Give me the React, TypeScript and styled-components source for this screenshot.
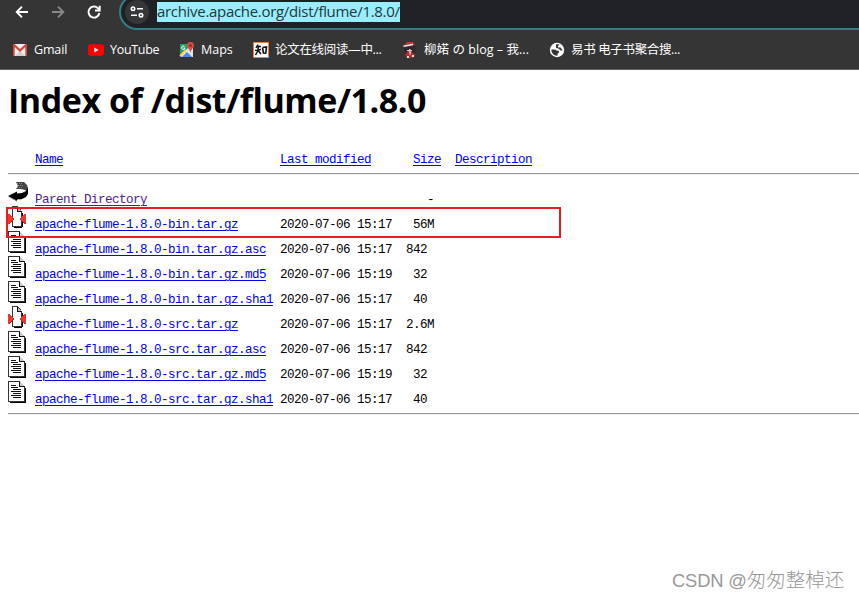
import React from 'react';
import styled, { createGlobalStyle } from 'styled-components';

const GlobalStyle = createGlobalStyle`
  * { box-sizing: border-box; }
  html, body { margin: 0; background: #fff; overflow: hidden; }
`;

const Page = styled.div`
  position: relative;
  width: 859px;
  height: 599px;
  overflow: hidden;
  display: flex;
  flex-direction: column;
  background: #fff;
`;

const Toolbar = styled.div`
  height: 30px;
  flex: none;
  display: flex;
  align-items: flex-start;
  background: #353535;
  overflow: hidden;
`;

const NavButtons = styled.div`
  width: 119px;
  height: 24px;
  flex: none;
  display: flex;
  align-items: center;
  gap: 16px;
  padding-left: 12px;
`;

const AddressBar = styled.div`
  width: 780px;
  height: 36px;
  flex: none;
  margin-top: -6px;
  display: flex;
  align-items: center;
  padding-left: 4px;
  border: 2px solid #318089;
  border-radius: 18px;
  background: #202124;
`;

const SiteChip = styled.div`
  width: 24px;
  height: 24px;
  display: flex;
  align-items: center;
  justify-content: center;
  border-radius: 50%;
  background: #353638;
`;

const Url = styled.span`
  width: 243px;
  height: 20px;
  margin-left: 8px;
  background: #98eefc;
  color: #27363a;
  font: 15px/19px 'Open Sans', sans-serif;
  letter-spacing: -0.31px;
  white-space: nowrap;
`;

const Bookmarks = styled.div`
  height: 40px;
  flex: none;
  display: flex;
  align-items: center;
  background: #353535;
  border-bottom: 1px solid #616161;
  padding-left: 12px;
`;

const Bookmark = styled.div<{ $width: number; $spacing?: number }>`
  width: ${(p) => p.$width}px;
  flex: none;
  display: flex;
  align-items: center;
  color: #fff;
  font: 12.5px/18px 'Open Sans', 'Noto Sans CJK SC', sans-serif;
  letter-spacing: ${(p) => p.$spacing ?? 0}px;
  white-space: nowrap;
  svg { flex: none; margin-right: 6px; }
`;

const Listing = styled.main`
  flex: 1;
  padding: 10px 0 0 8px;
`;

const Title = styled.h1`
  margin: 0;
  height: 40px;
  font: 700 34px/40px 'Open Sans', sans-serif;
  letter-spacing: -0.44px;
  color: #000;
  white-space: nowrap;
`;

const Row = styled.div`
  height: 25px;
  display: grid;
  grid-template-columns: 27px 245px 126px 49px 1fr;
  font: 12.6px/25px 'Liberation Mono', monospace;
  letter-spacing: -0.561px;
  color: #000;
  white-space: pre;
  > * { height: 25px; }
  > svg { display: block; height: 22px; }
`;

const HeadRow = styled(Row)`
  margin-top: 28px;
`;

const Cell = styled.span`
  padding-top: 7px;
`;

const HeadCell = styled.span``;

const Link = styled.a<{ $visited?: boolean }>`
  color: ${(p) => (p.$visited ? '#551a8b' : '#0000ee')};
  text-decoration: underline;
  text-decoration-thickness: 1px;
  text-underline-offset: 2px;
`;

const Rule = styled.hr`
  margin: 0;
  height: 2px;
  border: 0;
  border-top: 1px solid #9a9a9a;
  border-bottom: 1px solid #eee;
`;

const Rows = styled.div`
  padding: 6px 0;
  height: 238px;
`;

const Highlight = styled.div`
  position: absolute;
  left: 6px;
  top: 207px;
  width: 555px;
  height: 31px;
  border: 2px solid #ed1c24;
`;

const Watermark = styled.div`
  position: absolute;
  left: 672px;
  top: 566px;
  display: flex;
  align-items: baseline;
  font: 300 19.5px/26px 'Noto Sans CJK SC', sans-serif;
  letter-spacing: 0;
  color: #999;
  white-space: nowrap;
`;

const WatermarkLatin = styled.span`
  font: 18.4px/26px 'Liberation Sans', sans-serif;
  letter-spacing: -0.2px;
`;

const ArrowIcon = ({ color, flip }: { color: string; flip?: boolean }) => (
  <svg width="20" height="20" viewBox="0 0 20 20" fill="none" stroke={color} strokeWidth="1.9">
    <path d={flip ? 'M4 10h11M10 4.700l5.300 5.300-5.300 5.300' : 'M16 10H5M10 4.700L4.700 10l5.300 5.300'} />
  </svg>
);

const ReloadIcon = () => (
  <svg width="20" height="20" viewBox="0 0 20 20" fill="none" stroke="#fff" strokeWidth="1.9">
    <path d="M15.400 11A5.500 5.500 0 1 1 14 6.300L15.300 7.700M15.700 3.800v4.700H11" />
  </svg>
);

const TuneIcon = () => (
  <svg width="14" height="12" viewBox="0 0 14 12" fill="none" stroke="#fff" strokeWidth="1.6">
    <circle cx="3" cy="2.700" r="1.700" />
    <path d="M7 2.700h6M1 9.200h6" />
    <circle cx="11" cy="9.200" r="1.700" />
  </svg>
);

const GmailIcon = () => (
  <svg width="16" height="16" viewBox="0 0 16 16">
    <path fill="#eee" d="M1 2h14v12H1z" />
    <path fill="#cfcfcf" d="M3 14l5-5 5 5z" />
    <path fill="#d54236" d="M1 2h1.500L8 7l5.500-5H15v12h-1.700V5L8 10 2.700 5v9H1z" />
  </svg>
);

const YouTubeIcon = () => (
  <svg width="16" height="16" viewBox="0 0 16 16">
    <rect y="2.200" width="16" height="11.600" rx="2.800" fill="#f00" />
    <path fill="#fff" d="M6.300 5.500v5l4.300-2.500z" />
  </svg>
);

const MapsIcon = () => (
  <svg width="16" height="16" viewBox="0 0 16 16">
    <path fill="#1da362" d="M1 2h12v12H1z" />
    <path fill="#e4e4e4" d="M1 14L12 3l2 3v9H3z" />
    <path fill="#4285f4" d="M3 15l5-5 5 5z" />
    <path stroke="#ffd04b" strokeWidth="2" d="M1 14l6-6" />
    <path stroke="#fff" fill="none" strokeWidth="1" d="M5.500 4.500a1.700 1.700 0 1 0 .5 1.500H4.500" />
    <path fill="#dc4b3e" d="M11.500 0A3.600 3.600 0 0 0 8 3.600c0 2.700 3 3.600 3.500 7.400.5-3.800 3.500-4.700 3.500-7.400A3.600 3.600 0 0 0 11.500 0z" />
    <circle cx="11.500" cy="3.600" r="1.300" fill="#7f2a21" />
  </svg>
);

const ZhiIcon = () => (
  <svg width="16" height="16" viewBox="0 0 16 16">
    <path fill="#fff" stroke="#ed7d43" d="M.5.5h15v15H.5z" />
    <g fill="none" stroke="#111">
      <path strokeWidth="1.500" d="M5 2.500L3 6M4 4.500h4M2 8.500l6-1M5.500 4.500c0 4-1 6-3 8.500M5.500 9L8 12" />
      <path strokeWidth="1.600" d="M9.500 5.500l1 6M9.500 5.500l4-.5-.7 6-2.300.3" />
    </g>
  </svg>
);

const AvatarIcon = () => (
  <svg width="16" height="16" viewBox="0 0 16 16">
    <path fill="#2f2930" d="M2 4l8-2 4 4-1 5-9 1-2-3z" />
    <path fill="#cf2f2c" d="M2 3l3-3h6l2 3-4-1z" />
    <path stroke="#f5eeee" strokeWidth="1.500" d="M1.500 4.300L11 2.600" />
    <path fill="#e9c2b9" d="M5 7h5v2l-2 1-3-1z" />
    <path stroke="#292027" d="M5 7.500h2M8.500 7.500H11" />
    <path fill="#b22b2d" d="M5 10l2-1 3 1 3 3-2 3H5l-2-3z" />
    <path fill="#f4dfda" d="M7 9l1 5 1-4zM5 14h2v2H5zM10 13h2v2h-2z" />
  </svg>
);

const GlobeIcon = () => (
  <svg width="16" height="16" viewBox="0 0 16 16">
    <circle cx="8" cy="8" r="7.200" fill="#fff" />
    <path fill="#353535" d="M2.300 7.500h4.200l1.200 1.200H10v1.600L8.500 12v1.700C5 13.900 2.300 11 2.300 7.500zM7 2.300h3.500L9 4v1.500h2.500L13 7.500 13.500 9 11 8 9.500 6.500 7 6V4z" />
  </svg>
);

const ParentIcon = () => (
  <svg width="20" height="22" viewBox="0 0 20 22">
    <path fill="#444" d="M8 1h8l3 3 1 3v4l-3-2-4-1-5 0 2-3z" />
    <path stroke="#888" strokeDasharray="1 1" d="M9 2.500h6M10 4.500h6M9 6.500h6" />
    <path fill="#000" d="M20 7v6l-2 3-4 2-5 .5v2L0 15l9-4.500v2l5-.5 4-2z" />
    <path stroke="#aaa" strokeWidth=".7" d="M1 16l8 4M11 19l3-.5" />
  </svg>
);

const ArchiveIcon = () => (
  <svg width="20" height="22" viewBox="0 0 20 22" shapeRendering="crispEdges">
    <path fill="#000" d="M6 20h8v2H6zM14 7h1v14h-1z" />
    <path fill="#fff" stroke="#333" d="M4.500.5h5l4 5v15h-9z" />
    <path fill="#bbb" stroke="#111" d="M9.500.5v5h4" />
    <path fill="#f0372e" d="M0 8h1l5 4v2l-5 4H0zM18 8h-1l-5 4v2l5 4h1z" />
    <path fill="none" stroke="#8c2922" strokeWidth=".7" d="M1 17.500L6 13.500M17 17.500l-5-4" />
  </svg>
);

const DocumentIcon = () => (
  <svg width="20" height="22" viewBox="0 0 20 22" shapeRendering="crispEdges">
    <path fill="#000" d="M2 20h16v2H2zM17 7h1v14h-1z" />
    <path fill="#fff" stroke="#333" d="M.5.5h11l5 5v15H.5z" />
    <path fill="#ccc" stroke="#111" d="M11.500.5v5h5" />
    <path stroke="#111" d="M3 4.500h5M3 6.500h7M5 8.500h8M3 10.500h10M5 12.500h8M3 14.500h10M5 16.500h8" />
  </svg>
);

type Entry = { kind: 'parent' | 'archive' | 'text'; name: string; date?: string; size: string };

const entries: Entry[] = [
  { kind: 'parent', name: 'Parent Directory', size: '   -' },
  { kind: 'archive', name: 'apache-flume-1.8.0-bin.tar.gz', date: '2020-07-06 15:17', size: ' 56M' },
  { kind: 'text', name: 'apache-flume-1.8.0-bin.tar.gz.asc', date: '2020-07-06 15:17', size: '842' },
  { kind: 'text', name: 'apache-flume-1.8.0-bin.tar.gz.md5', date: '2020-07-06 15:19', size: ' 32' },
  { kind: 'text', name: 'apache-flume-1.8.0-bin.tar.gz.sha1', date: '2020-07-06 15:17', size: ' 40' },
  { kind: 'archive', name: 'apache-flume-1.8.0-src.tar.gz', date: '2020-07-06 15:17', size: '2.6M' },
  { kind: 'text', name: 'apache-flume-1.8.0-src.tar.gz.asc', date: '2020-07-06 15:17', size: '842' },
  { kind: 'text', name: 'apache-flume-1.8.0-src.tar.gz.md5', date: '2020-07-06 15:19', size: ' 32' },
  { kind: 'text', name: 'apache-flume-1.8.0-src.tar.gz.sha1', date: '2020-07-06 15:17', size: ' 40' },
];

const icons = { parent: ParentIcon, archive: ArchiveIcon, text: DocumentIcon };

export default function App() {
  return (
    <>
      <GlobalStyle />
      <Page>
        <Toolbar>
          <NavButtons>
            <ArrowIcon color="#fff" />
            <ArrowIcon color="#888" flip />
            <ReloadIcon />
          </NavButtons>
          <AddressBar>
            <SiteChip><TuneIcon /></SiteChip>
            <Url>archive.apache.org/dist/flume/1.8.0/</Url>
          </AddressBar>
        </Toolbar>
        <Bookmarks>
          <Bookmark $width={76} $spacing={-0.15}><GmailIcon />Gmail</Bookmark>
          <Bookmark $width={91} $spacing={-0.3}><YouTubeIcon />YouTube</Bookmark>
          <Bookmark $width={74}><MapsIcon />Maps</Bookmark>
          <Bookmark $width={149} $spacing={-0.3}><ZhiIcon />论文在线阅读—中...</Bookmark>
          <Bookmark $width={147} $spacing={0.05}><AvatarIcon />柳婼 の blog – 我...</Bookmark>
          <Bookmark $width={150} $spacing={-0.35}><GlobeIcon />易书 电子书聚合搜...</Bookmark>
        </Bookmarks>
        <Listing>
          <Title>Index of /dist/flume/1.8.0</Title>
          <HeadRow>
            <span />
            <HeadCell><Link>Name</Link></HeadCell>
            <HeadCell><Link>Last modified</Link></HeadCell>
            <HeadCell> <Link>Size</Link></HeadCell>
            <HeadCell><Link>Description</Link></HeadCell>
          </HeadRow>
          <Rule />
          <Rows>
            {entries.map((entry) => {
              const Icon = icons[entry.kind];
              return (
                <Row key={entry.name}>
                  <Icon />
                  <Cell><Link $visited={entry.kind === 'parent'}>{entry.name}</Link></Cell>
                  <Cell>{entry.date}</Cell>
                  <Cell>{entry.size}</Cell>
                </Row>
              );
            })}
          </Rows>
          <Rule />
        </Listing>
        <Highlight />
        <Watermark><WatermarkLatin>CSDN @</WatermarkLatin>匆匆整棹还</Watermark>
      </Page>
    </>
  );
}
